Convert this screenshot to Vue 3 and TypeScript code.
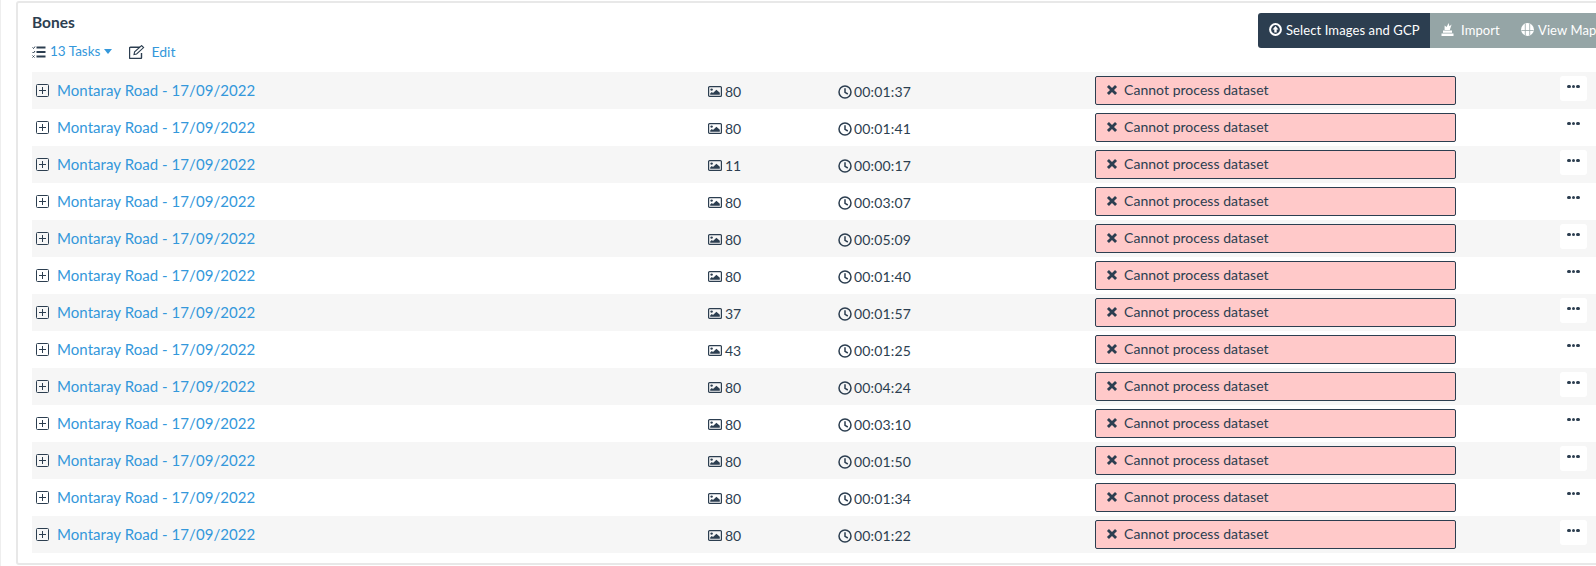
<script setup lang="ts">
interface Task { images: number; time: string }
const tasks: Task[] = [
  { images: 80, time: '00:01:37' },
  { images: 80, time: '00:01:41' },
  { images: 11, time: '00:00:17' },
  { images: 80, time: '00:03:07' },
  { images: 80, time: '00:05:09' },
  { images: 80, time: '00:01:40' },
  { images: 37, time: '00:01:57' },
  { images: 43, time: '00:01:25' },
  { images: 80, time: '00:04:24' },
  { images: 80, time: '00:03:10' },
  { images: 80, time: '00:01:50' },
  { images: 80, time: '00:01:34' },
  { images: 80, time: '00:01:22' },
]
</script>

<template>
  <div class="page">
    <section class="panel">
      <header class="head">
        <div class="head-left">
          <h4 class="title">Bones</h4>
          <div class="links">
            <svg class="ico-tasks" width="14" height="12" viewBox="0 0 14 12">
              <path d="M4.5 1.5h9M4.5 6h9M4.5 10.5h9" stroke="#2c3e50" stroke-width="2" fill="none" />
              <path d="M0.5 1.5l1 1 1.5-2M0.5 6l1 1 1.5-2" stroke="#2c3e50" stroke-width="1" fill="none" />
              <path d="M0.5 9.5l2 2M2.5 9.5l-2 2" stroke="#2c3e50" stroke-width="1" fill="none" />
            </svg>
            <a class="link tasks">13 Tasks</a>
            <span class="caret"></span>
            <svg class="ico-edit" width="16" height="14" viewBox="0 0 16 14">
              <path d="M11 2.2H1.5a1 1 0 0 0-1 1v9.3a1 1 0 0 0 1 1h10a1 1 0 0 0 1-1V8" stroke="#2c3e50" stroke-width="1.4" fill="none" />
              <path d="M5 9.5l.6-2.6L12.6.6l2 2L7.6 9z" stroke="#2c3e50" stroke-width="1.1" fill="none" />
            </svg>
            <a class="link edit">Edit</a>
          </div>
        </div>
        <div class="actions">
          <button class="btn primary">
            <svg width="13" height="13" viewBox="0 0 13 13">
              <circle cx="6.5" cy="6.5" r="5.4" fill="none" stroke="#fff" stroke-width="2" />
              <path d="M6.5 3L9.4 6.4H7.7V9.6H5.3V6.4H3.6z" fill="#fff" />
            </svg>
            Select Images and GCP
          </button>
          <button class="btn grey import">
            <svg width="13" height="13" viewBox="0 0 13 13">
              <path d="M0.5 10.6h12V13H.5zM2 7.6h9v2.2H2zM3.6 2.4L5.6 4 7.6 0l.8 3.2L10.6 1.4 8.8 6.9H3.6z" fill="#fff" />
            </svg>
            Import
          </button>
          <button class="btn grey map">
            <svg width="13" height="13" viewBox="0 0 13 13">
              <circle cx="6.5" cy="6.5" r="6.4" fill="#fff" />
              <path d="M.5 7.5h12M4.3.6v11.8M8.7.6v11.8" stroke="#95a5a6" stroke-width=".8" fill="none" />
            </svg>
            View Map
          </button>
        </div>
      </header>

      <div class="rows">
        <div v-for="(t, i) in tasks" :key="i" class="row">
          <div class="c-name">
            <svg class="expand" width="13" height="13" viewBox="0 0 13 13">
              <rect x=".5" y=".5" width="12" height="12" rx="1" fill="none" stroke="#2c3e50" />
              <path d="M3 6.5h7M6.5 3v7" stroke="#2c3e50" fill="none" />
            </svg>
            <a class="link name">Montaray Road - 17/09/2022</a>
          </div>
          <div class="c-img">
            <svg width="14" height="11" viewBox="0 0 14 11">
              <rect x=".6" y=".6" width="12.8" height="9.8" rx="1" fill="none" stroke="#2c3e50" stroke-width="1.2" />
              <circle cx="3.6" cy="3.6" r="1.2" fill="#2c3e50" />
              <path d="M2.2 8.8V7.4l1.6-1.3 1.2 1 3.4-3.3 3.4 3v2z" fill="#2c3e50" />
            </svg>
            <span>{{ t.images }}</span>
          </div>
          <div class="c-time">
            <svg width="14" height="14" viewBox="0 0 14 14">
              <circle cx="7" cy="7" r="6" fill="none" stroke="#2c3e50" stroke-width="1.5" />
              <path d="M7 3.2V7.4L9.8 9" fill="none" stroke="#2c3e50" stroke-width="1.5" />
            </svg>
            <span class="time">{{ t.time }}</span>
          </div>
          <div class="c-status">
            <div class="status">
              <svg width="12" height="12" viewBox="0 0 11 11">
                <path d="M1.8 1.8l7.4 7.4M9.2 1.8L1.8 9.2" stroke="#2c3e50" stroke-width="2.6" fill="none" />
              </svg>
              <span>Cannot process dataset</span>
            </div>
          </div>
          <div class="c-menu">
            <button class="dots" :class="{ plain: i % 2 === 1 }">
              <i></i><i></i><i></i>
            </button>
          </div>
        </div>
      </div>
    </section>
  </div>
</template>

<style>
html, body { margin: 0; background: #fff; overflow: hidden; }
</style>

<style scoped>
.page {
  width: 1596px;
  height: 566px;
  overflow: hidden;
  box-sizing: border-box;
  padding: 1px 0 0 15px;
  border-left: 1px solid #eeeeee;
  font-family: Lato, "Liberation Sans", sans-serif;
  font-size: 14px;
  color: #2c3e50;
}
.panel {
  width: 1640px;
  height: 564px;
  box-sizing: border-box;
  padding: 0 0 0 14px;
  border: 2px solid #e8e8e8;
  border-radius: 3px;
}
.head {
  height: 69px;
  display: flex;
  justify-content: flex-start;
}
.head-left { width: 1226px; }
.title {
  margin: 10px 0 0;
  font-size: 15.5px;
  line-height: 19px;
  font-weight: 700;
}
.links {
  margin-top: 11px;
  display: flex;
  align-items: center;
  line-height: 17px;
}
.link { color: #3498db; text-decoration: none; }
.tasks { margin-left: 4px; font-size: 13.5px; }
.caret {
  margin-left: 4px;
  border-left: 4px solid transparent;
  border-right: 4px solid transparent;
  border-top: 5px solid #3498db;
}
.ico-edit { margin-left: 17px; }
.edit { margin-left: 6px; font-size: 14px; }
.actions { display: flex; margin-top: 10px; height: 35px; }
.btn {
  border: 0;
  height: 35px;
  display: flex;
  align-items: center;
  gap: 4px;
  padding-bottom: 3px;
  color: #fff;
  font: 13px Lato, "Liberation Sans", sans-serif;
  letter-spacing: 0.1px;
  white-space: nowrap;
}
.primary {
  width: 172px;
  padding-left: 11px;
  padding-right: 0;
  background: #2c3e50;
  border-radius: 3px 0 0 3px;
}
.grey { background: #95a5a6; }
.import { width: 80px; padding-left: 11px; padding-right: 0; gap: 7px; }
.map { width: 110px; padding-left: 11px; padding-right: 0; }
.row {
  height: 37px;
  box-sizing: border-box;
  padding-top: 4px;
  display: flex;
  align-items: flex-start;
  background: #fff;
}
.row:nth-child(odd) { background: #f6f6f6; }
.c-name {
  width: 676px;
  height: 27px;
  display: flex;
  align-items: center;
  box-sizing: border-box;
  padding-left: 4px;
}
.expand { margin-right: 8px; flex: none; margin-top: 1px; }
.name { font-size: 15px; letter-spacing: 0.06px; }
.c-img {
  width: 130px;
  height: 29px;
  display: flex;
  align-items: center;
  gap: 3px;
  padding-top: 2px;
  box-sizing: border-box;
}
.c-time {
  width: 257px;
  height: 29px;
  display: flex;
  align-items: center;
  gap: 2px;
  padding-top: 2px;
  box-sizing: border-box;
}
.time { letter-spacing: 0.15px; }
.c-status { width: 465px; }
.status {
  width: 361px;
  height: 29px;
  box-sizing: border-box;
  display: flex;
  align-items: center;
  gap: 6px;
  padding: 0 0 2px 10px;
  background: #ffc9c9;
  border: 1px solid #2c3e50;
  border-radius: 2px;
  font-size: 14px;
  letter-spacing: 0.04px;
}
.dots {
  width: 27px;
  height: 25px;
  padding: 0 0 4px;
  border: 0;
  border-radius: 3px;
  background: #fff;
  display: flex;
  align-items: center;
  justify-content: center;
  gap: 1px;
}
.dots.plain { background: transparent; }
.dots i {
  width: 3.6px;
  height: 3.6px;
  border-radius: 50%;
  background: #2c3e50;
}
</style>
